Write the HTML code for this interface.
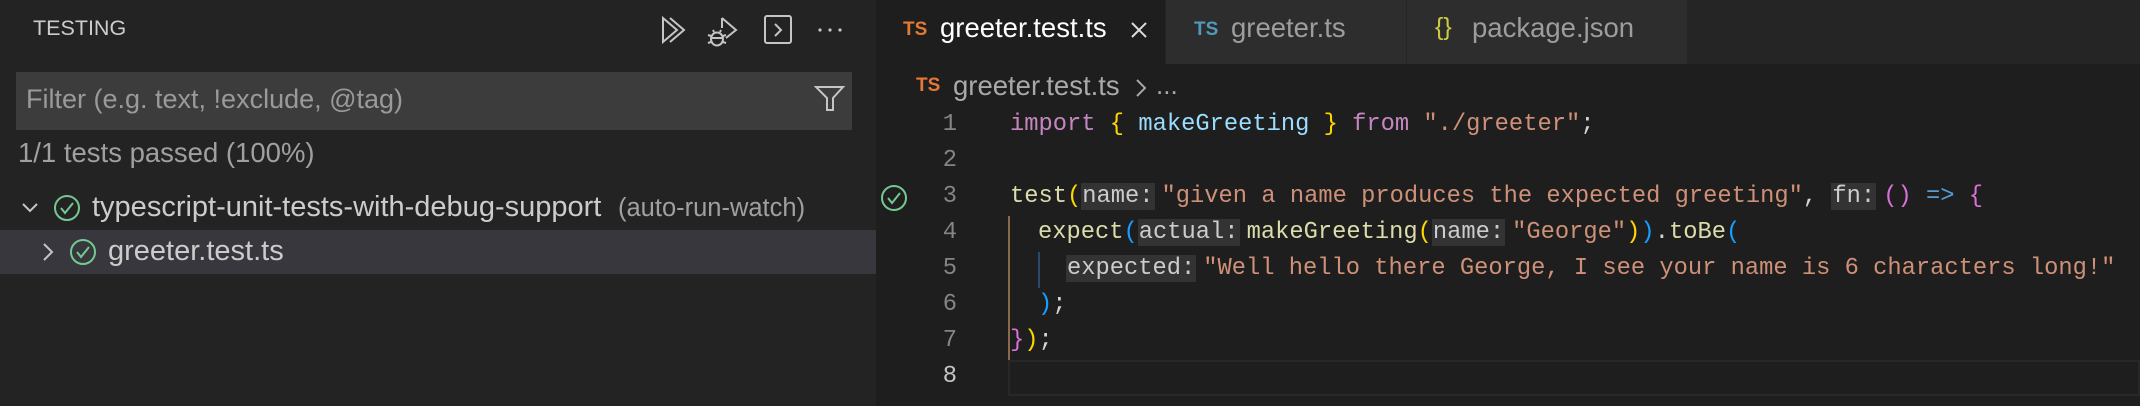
<!DOCTYPE html>
<html><head><meta charset="utf-8"><style>
*{margin:0;padding:0;box-sizing:border-box}
body{width:2140px;height:406px;background:#1e1e1e;position:relative;overflow:hidden;font-family:"Liberation Sans",sans-serif}
.abs{position:absolute;white-space:nowrap}
#side{position:absolute;left:0;top:0;width:876px;height:406px;background:#232323}
.sans{font-size:27px;color:#cccccc}
.code{font-family:"Liberation Mono",monospace;font-size:23.75px;line-height:36px;color:#d4d4d4}
.ln{position:absolute;left:900px;width:57px;text-align:right;font-family:"Liberation Mono",monospace;font-size:23.75px;line-height:36px;color:#858585}
.kw{color:#c586c0}.b1{color:#ffd700}.b2{color:#da70d6}.b3{color:#179fff}.v{color:#9cdcfe}.s{color:#ce9178}.f{color:#dcdcaa}.op{color:#569cd6}
.h{background:#333333;color:#cccccc;padding:0 1px;margin-right:7px}
</style></head><body>
<div id="side"></div>
<div class="abs" style="left:33px;top:16px;font-size:21.5px;color:#cccccc">TESTING</div>
<svg class="abs" style="left:660px;top:14px" width="190" height="34" viewBox="0 0 190 34" fill="none" stroke="#c5c5c5" stroke-width="2">
<path d="M3 4 L3 28 L17 16 Z"/><path d="M10 4 L24 16 L10 28"/>
<path d="M62 4 L62 14 M62 4 L76 16 L66 24"/>
<ellipse cx="57" cy="25" rx="6" ry="6.5"/><path d="M51 24 H63 M48 21 L51 22 M48 29 L51 28 M66 21 L63 22 M66 29 L63 28 M54 18 L53 16 M60 18 L61 16"/>
<rect x="105" y="2" width="26" height="27" rx="2"/><path d="M115 10 L121 16 L115 22"/>
<circle cx="180" cy="16" r="1.6" fill="#c5c5c5" stroke="none"/><circle cx="170" cy="16" r="1.6" fill="#c5c5c5" stroke="none"/><circle cx="160" cy="16" r="1.6" fill="#c5c5c5" stroke="none"/>
</svg>
<div class="abs" style="left:16px;top:72px;width:836px;height:58px;background:#3c3c3c"></div>
<div class="abs sans" style="left:26px;top:84px;color:#9a9a9a">Filter (e.g. text, !exclude, @tag)</div>
<svg class="abs" style="left:814px;top:86px" width="32" height="26" viewBox="0 0 32 26" fill="none" stroke="#c5c5c5" stroke-width="2"><path d="M2 1 H29 L19 12 V24 H13 V12 Z"/></svg>
<div class="abs sans" style="left:18px;top:137px;color:#a0a0a0;font-size:27.5px">1/1 tests passed (100%)</div>
<svg class="abs" style="left:20px;top:198px" width="20" height="20" viewBox="0 0 20 20" fill="none" stroke="#c5c5c5" stroke-width="2"><path d="M3 6 L10 13 L17 6"/></svg>
<svg class="abs" style="left:53px;top:194px" width="28" height="28" viewBox="0 0 28 28" fill="none" stroke="#73c991" stroke-width="2"><circle cx="14" cy="14" r="12"/><path d="M8 14 L12 19 L20 9"/></svg>
<div class="abs sans" style="left:92px;top:191px;font-size:29px">typescript-unit-tests-with-debug-support</div>
<div class="abs" style="left:618px;top:194px;font-size:25.5px;color:#a0a0a0">(auto-run-watch)</div>
<div class="abs" style="left:0;top:230px;width:876px;height:44px;background:#37373d"></div>
<svg class="abs" style="left:38px;top:242px" width="20" height="20" viewBox="0 0 20 20" fill="none" stroke="#c5c5c5" stroke-width="2"><path d="M6 2 L14 10 L6 18"/></svg>
<svg class="abs" style="left:69px;top:238px" width="28" height="28" viewBox="0 0 28 28" fill="none" stroke="#73c991" stroke-width="2"><circle cx="14" cy="14" r="12"/><path d="M8 14 L12 19 L20 9"/></svg>
<div class="abs sans" style="left:108px;top:235px;font-size:29px">greeter.test.ts</div>

<!-- tabs -->
<div class="abs" style="left:876px;top:0;width:1264px;height:64px;background:#252526"></div>
<div class="abs" style="left:876px;top:0;width:289px;height:64px;background:#1e1e1e"></div>
<div class="abs" style="left:1165px;top:0;width:241px;height:64px;background:#2d2d2d;border-left:1px solid #252526"></div>
<div class="abs" style="left:1406px;top:0;width:281px;height:64px;background:#2d2d2d;border-left:1px solid #252526"></div>
<div class="abs" style="left:903px;top:19px;font-size:19px;font-weight:bold;color:#e37933">TS</div>
<div class="abs" style="left:940px;top:12px;font-size:27.5px;color:#ffffff">greeter.test.ts</div>
<svg class="abs" style="left:1129px;top:20px" width="20" height="20" viewBox="0 0 20 20" stroke="#dddddd" stroke-width="2"><path d="M3 3 L17 17 M17 3 L3 17"/></svg>
<div class="abs" style="left:1194px;top:19px;font-size:19px;font-weight:bold;color:#519aba">TS</div>
<div class="abs" style="left:1231px;top:12px;font-size:27.5px;color:#9d9d9d">greeter.ts</div>
<div class="abs" style="left:1435px;top:13px;font-size:25px;color:#cbcb41">{}</div>
<div class="abs" style="left:1472px;top:12px;font-size:27.5px;color:#9d9d9d">package.json</div>

<!-- breadcrumb -->
<div class="abs" style="left:916px;top:75px;font-size:19px;font-weight:bold;color:#e37933">TS</div>
<div class="abs" style="left:953px;top:70px;font-size:27.5px;color:#a9a9a9">greeter.test.ts</div>
<svg class="abs" style="left:1134px;top:78px" width="14" height="20" viewBox="0 0 14 20" fill="none" stroke="#a9a9a9" stroke-width="2"><path d="M3 2 L11 10 L3 18"/></svg>
<div class="abs" style="left:1156px;top:70px;font-size:26px;color:#a9a9a9">...</div>

<!-- current line -->
<div class="abs" style="left:1008px;top:360px;width:1132px;height:36px;border:2px solid #282828"></div>
<div class="abs" style="left:1008px;top:216px;width:2px;height:144px;background:#8a6a4a"></div>
<div class="abs" style="left:1038px;top:252px;width:2px;height:36px;background:#2a4a6a"></div>
<svg class="abs" style="left:880px;top:184px" width="28" height="28" viewBox="0 0 28 28" fill="none" stroke="#73c991" stroke-width="2"><circle cx="14" cy="14" r="12"/><path d="M8 14 L12 19 L20 9"/></svg>

<div class="ln" style="top:107px">1</div>
<div class="ln" style="top:143px">2</div>
<div class="ln" style="top:179px">3</div>
<div class="ln" style="top:215px">4</div>
<div class="ln" style="top:251px">5</div>
<div class="ln" style="top:287px">6</div>
<div class="ln" style="top:323px">7</div>
<div class="ln" style="top:359px;color:#c6c6c6">8</div>

<div class="abs code" style="left:1010px;top:107px"><span class="kw">import</span> <span class="b1">{</span> <span class="v">makeGreeting</span> <span class="b1">}</span> <span class="kw">from</span> <span class="s">"./greeter"</span>;</div>
<div class="abs code" style="left:1010px;top:179px"><span class="f">test</span><span class="b1">(</span><span class="h">name:</span><span class="s">"given a name produces the expected greeting"</span>, <span class="h">fn:</span><span class="b2">()</span> <span class="op">=&gt;</span> <span class="b2">{</span></div>
<div class="abs code" style="left:1038px;top:215px"><span class="f">expect</span><span class="b3">(</span><span class="h">actual:</span><span class="f">makeGreeting</span><span class="b1">(</span><span class="h">name:</span><span class="s">"George"</span><span class="b1">)</span><span class="b3">)</span>.<span class="f">toBe</span><span class="b3">(</span></div>
<div class="abs code" style="left:1066px;top:251px"><span class="h">expected:</span><span class="s">"Well hello there George, I see your name is 6 characters long!"</span></div>
<div class="abs code" style="left:1038px;top:287px"><span class="b3">)</span>;</div>
<div class="abs code" style="left:1010px;top:323px"><span class="b2">}</span><span class="b1">)</span>;</div>
</body></html>
